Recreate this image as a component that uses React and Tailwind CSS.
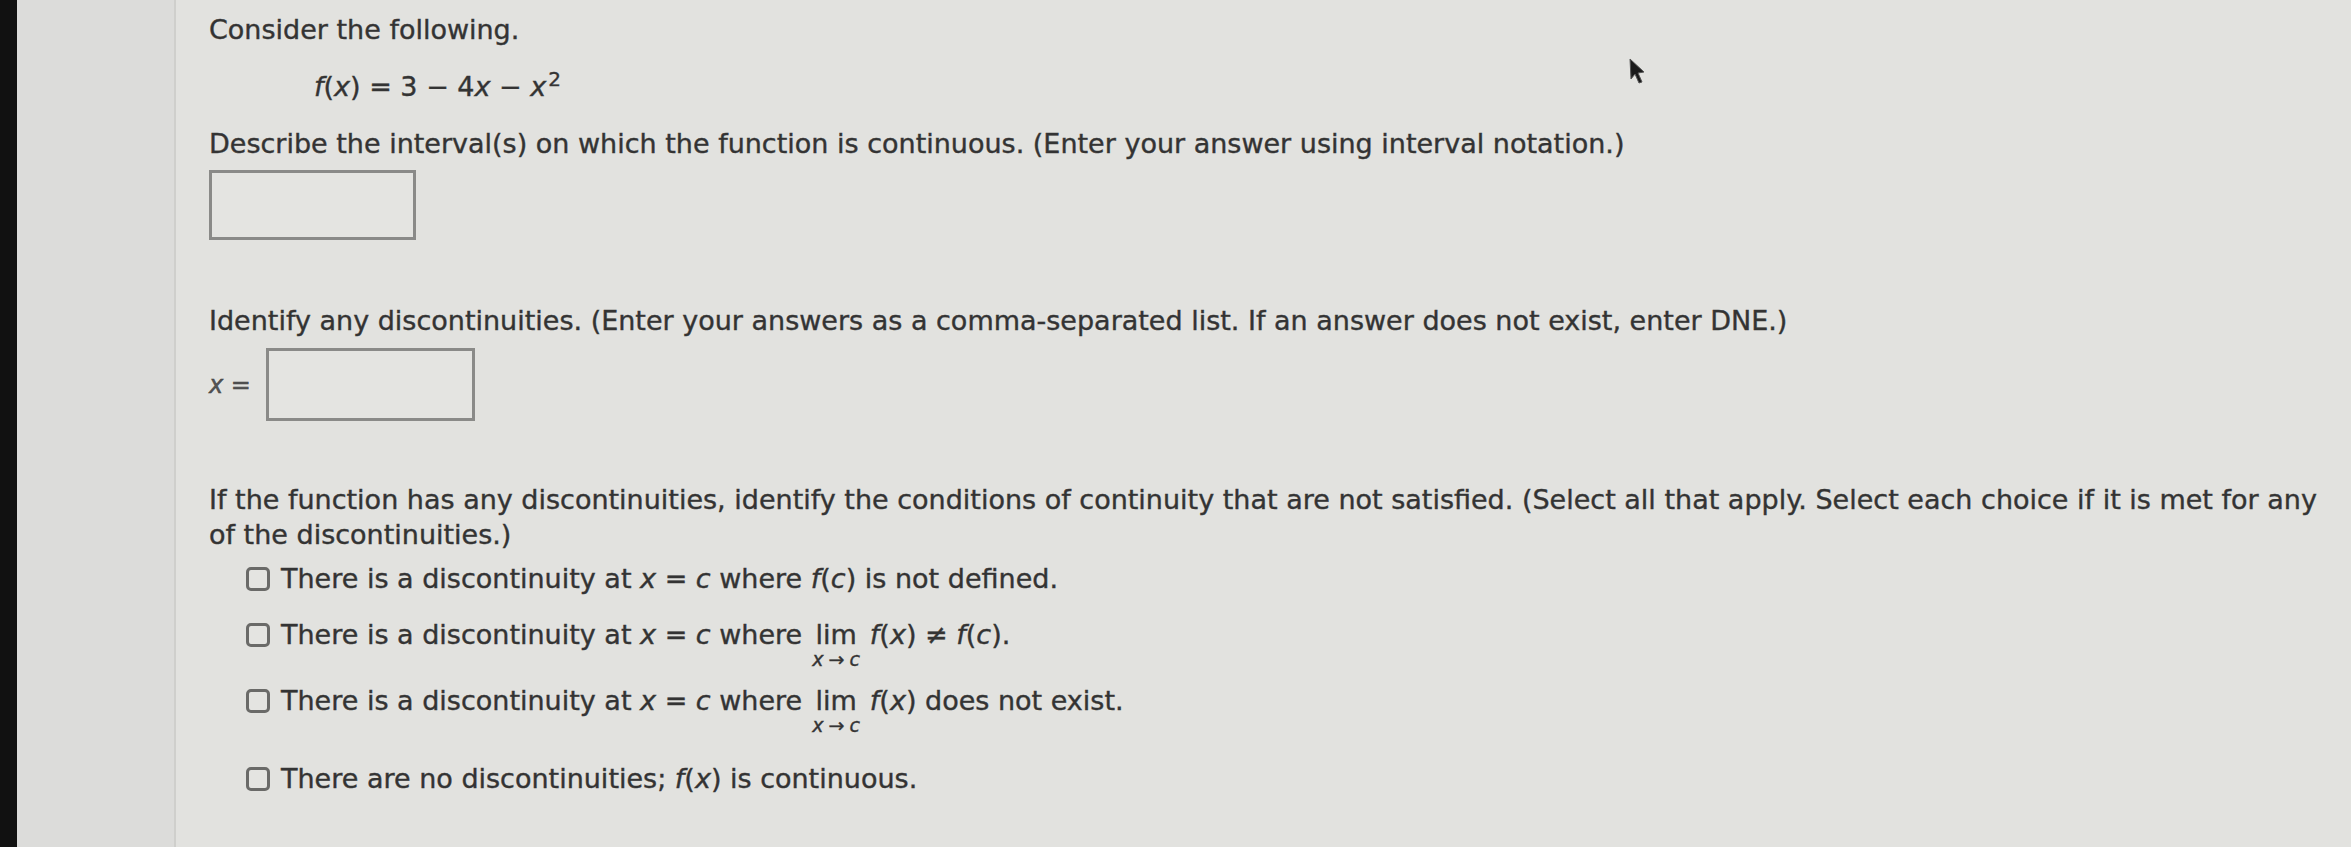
import React from 'react';

const F = () => <span className="italic">f</span>;
const X = () => <span className="italic">x</span>;
const C = () => <span className="italic">c</span>;

function Lim() {
  return (
    <span className="inline-flex flex-col items-center align-top mx-[10px]">
      <span className="leading-[35px]">lim</span>
      <span className="text-[19px] leading-[14px] italic">x<span className="not-italic mx-[5px]">→</span>c</span>
    </span>
  );
}

function Box({ className = '' }) {
  return <div className={`border-[3px] border-[#8a8a88] bg-[#e4e4e1] ${className}`} />;
}

function Option({ children, className = '' }) {
  return (
    <div className={`flex items-start ${className}`}>
      <span className="mt-[6px] h-[24px] w-[24px] shrink-0 rounded-[5px] border-[3px] border-[#6a6a68] bg-[#e4e4e1]" />
      <span className="ml-[11px] leading-[35px] whitespace-nowrap">{children}</span>
    </div>
  );
}

export default function App() {
  return (
    <div className="relative flex h-[847px] w-full overflow-hidden bg-[#e2e2df] text-[#333] [-webkit-text-stroke:0.4px_#3a3a3a] font-['DejaVu_Sans',Verdana,sans-serif] text-[27px]">
      <div className="w-[17px] shrink-0 bg-[#111]" />
      <div className="w-[159px] shrink-0 border-r-2 border-[#cfcfcc] bg-[#dcdcda]" />

      <div className="flex-1 pl-[33px] pt-[14px]">
        <p className="leading-[32px]">Consider the following.</p>
        <p className="mt-[25px] ml-[105px] leading-[32px]">
          <F />(<X />) = 3 − 4<X /> − <X /><sup className="text-[20px] ml-[2px]">2</sup>
        </p>
        <p className="mt-[25px] leading-[32px] whitespace-nowrap">
          Describe the interval(s) on which the function is continuous. (Enter your answer using interval notation.)
        </p>
        <Box className="mt-[10px] h-[70px] w-[207px]" />

        <p className="mt-[65px] leading-[32px] whitespace-nowrap">
          Identify any discontinuities. (Enter your answers as a comma-separated list. If an answer does not exist, enter DNE.)
        </p>
        <div className="mt-[11px] flex items-center">
          <span className="w-[57px] text-[24px] text-[#555]"><X /> =</span>
          <Box className="h-[73px] w-[209px]" />
        </div>

        <p className="mt-[61px] leading-[35px] whitespace-nowrap">
          If the function has any discontinuities, identify the conditions of continuity that are not satisfied. (Select all that apply. Select each choice if it is met for any
          <br />
          of the discontinuities.)
        </p>

        <div className="ml-[37px] flex flex-col">
          <Option className="mt-[9px]">
            There is a discontinuity at <X /> = <C /> where <F />(<C />) is not defined.
          </Option>
          <Option className="mt-[21px]">
            There is a discontinuity at <X /> = <C /> where
            <Lim />
            <F />(<X />) ≠ <F />(<C />).
          </Option>
          <Option className="mt-[17px]">
            There is a discontinuity at <X /> = <C /> where
            <Lim />
            <F />(<X />) does not exist.
          </Option>
          <Option className="mt-[29px]">
            There are no discontinuities; <F />(<X />) is continuous.
          </Option>
        </div>
      </div>

      {/* mouse pointer */}
      <svg className="absolute left-[1627px] top-[57px]" width="20" height="28" viewBox="0 0 20 28">
        <path d="M3 2 L4 22 L8 17 L12 26 L15 25 L11 16 L17 15 Z" fill="#1a1a1a" stroke="#555" strokeWidth="1" />
      </svg>
    </div>
  );
}
